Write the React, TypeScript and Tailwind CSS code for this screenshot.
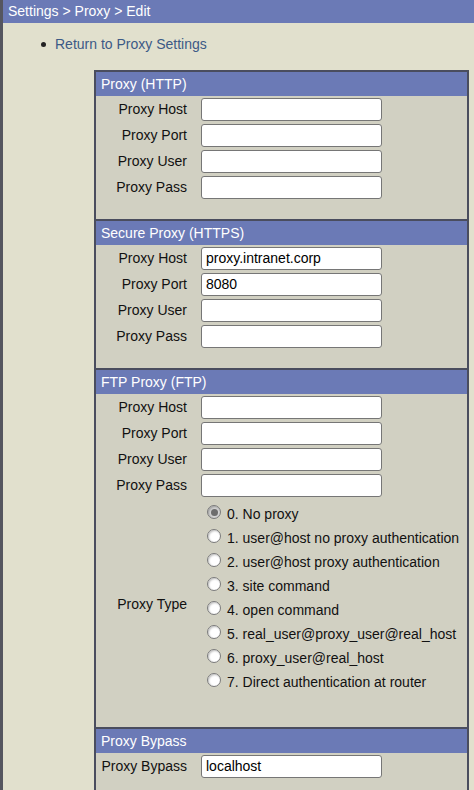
import React from "react";

const FONT = { fontFamily: '"Liberation Sans", Arial, sans-serif' };

type Field = { label: string; value?: string };

const proxyFields: Field[] = [
  { label: "Proxy Host" },
  { label: "Proxy Port" },
  { label: "Proxy User" },
  { label: "Proxy Pass" },
];

const proxyTypes = [
  "0. No proxy",
  "1. user@host no proxy authentication",
  "2. user@host proxy authentication",
  "3. site command",
  "4. open command",
  "5. real_user@proxy_user@real_host",
  "6. proxy_user@real_host",
  "7. Direct authentication at router",
];

function TextBox({ value = "" }: { value?: string }) {
  return (
    <input
      type="text"
      defaultValue={value}
      className="h-[23px] w-[181px] rounded-[3px] border border-[#767676] bg-white px-[4px] text-[14px] text-black outline-none"
      style={FONT}
    />
  );
}

function Row({ label, value }: Field) {
  return (
    <div className="flex h-[26px] items-center">
      <div className="w-[98px] pr-[7px] text-right whitespace-nowrap">{label}</div>
      <div className="pl-[7px]">
        <TextBox value={value} />
      </div>
    </div>
  );
}

function SectionHead({ title }: { title: string }) {
  return (
    <div className="flex h-[24px] items-center border-t-2 border-[#4a4d5e] bg-[#6b7ab6] pl-[5px] text-white box-content">
      {title}
    </div>
  );
}

function Radio({ checked }: { checked?: boolean }) {
  return (
    <span
      className={
        "ml-[6px] mr-[6px] flex h-[14px] w-[14px] shrink-0 items-center justify-center rounded-full border-[1.5px] border-[#7a7a7a] shadow-[inset_1px_1px_2px_rgba(0,0,0,0.25)] " +
        (checked ? "bg-[#d4d4d4]" : "bg-white")
      }
    >
      {checked && <span className="h-[7px] w-[7px] rounded-full bg-[#6d6d6d]" />}
    </span>
  );
}

function Section({ title, fields }: { title: string; fields: Field[] }) {
  return (
    <div>
      <SectionHead title={title} />
      <div className="pb-[19px]">
        {fields.map((f) => (
          <Row key={f.label} {...f} />
        ))}
      </div>
    </div>
  );
}

export default function App() {
  return (
    <div
      className="h-[790px] w-full overflow-hidden border-l-[3px] border-[#55565f] bg-[#e1e0cd] text-[14px] text-[#111]"
      style={FONT}
    >
      <div className="flex h-[23px] items-center bg-[#6b7ab6] pl-[5px] text-white">
        Settings &gt; Proxy &gt; Edit
      </div>

      <div className="mt-[12px] flex h-[18px] items-center pl-[38px]">
        <span className="h-[5px] w-[5px] rounded-full bg-[#222]" />
        <span className="ml-[9px] text-[#3c5a86]">Return to Proxy Settings</span>
      </div>

      <div className="ml-[91px] mt-[17px] w-[375px] border-x-2 border-[#4a4d5e] bg-[#d1d0c2]">
        <Section title="Proxy (HTTP)" fields={proxyFields} />
        <Section
          title="Secure Proxy (HTTPS)"
          fields={[
            { label: "Proxy Host", value: "proxy.intranet.corp" },
            { label: "Proxy Port", value: "8080" },
            { label: "Proxy User" },
            { label: "Proxy Pass" },
          ]}
        />

        <div>
          <SectionHead title="FTP Proxy (FTP)" />
          <div className="pb-[17px]">
            {proxyFields.map((f) => (
              <Row key={f.label} {...f} />
            ))}
            <div className="flex items-center">
              <div className="w-[98px] pr-[7px] text-right whitespace-nowrap">Proxy Type</div>
              <div className="pb-[16px] pl-[7px] pt-[4px]">
                {proxyTypes.map((t, i) => (
                  <div key={t} className="flex h-[24px] items-center whitespace-nowrap">
                    <span className="-mt-[4px]">
                      <Radio checked={i === 0} />
                    </span>
                    <span>{t}</span>
                  </div>
                ))}
              </div>
            </div>
          </div>
        </div>

        <Section title="Proxy Bypass" fields={[{ label: "Proxy Bypass", value: "localhost" }]} />
      </div>
    </div>
  );
}
